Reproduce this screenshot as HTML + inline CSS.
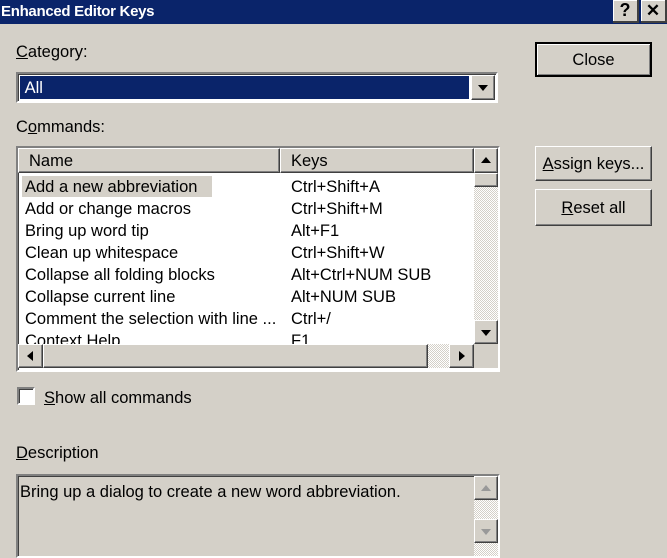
<!DOCTYPE html><html><head><style>
body{margin:0;width:667px;height:547px;background:#d4d0c8;font-family:"Liberation Sans",Arial,sans-serif;font-size:16.5px;color:#000;position:relative;overflow:hidden}
.a{position:absolute}
.title{left:0;top:0;width:667px;height:24px;background:#0a246a;color:#fff;font-weight:bold;font-size:15px;line-height:23px;letter-spacing:-0.3px}
.tb{top:0;width:24px;height:21px;background:#d4d0c8;border-right:2px solid #404040;border-bottom:2px solid #404040;box-shadow:inset 1px 1px #fff;color:#000;font-weight:bold;text-align:center;line-height:21px;font-size:18px;letter-spacing:0}
.sunk{border:2px solid;border-color:#808080 #fff #fff #808080;box-shadow:inset 1px 1px #404040}
.btn{background:#d4d0c8;border:1px solid;border-color:#fff #404040 #404040 #fff;box-shadow:inset -1px -1px #808080;text-align:center;box-sizing:border-box}
.row{height:22px;line-height:24px}
.k{height:22px;line-height:24px}
.tri{width:0;height:0;position:absolute}
u{text-decoration:underline}
.track{background:repeating-conic-gradient(#fff 0 25%,#d4d0c8 0 50%) 0 0/2px 2px}
</style></head><body>
<div class="a title"><span style="padding-left:1px">Enhanced Editor Keys</span></div>
<div class="a tb" style="left:613px">?</div>
<div class="a tb" style="left:641px;font-size:17px">✕</div>

<div class="a" style="left:16px;top:43px"><u>C</u>ategory:</div>
<div class="a sunk" style="left:16px;top:72px;width:478px;height:27px;background:#fff">
 <div class="a" style="left:2px;top:2px;width:449px;height:23px;background:#0a246a;color:#fff;line-height:25px">&nbsp;All</div>
 <div class="a btn" style="left:453px;top:1px;width:24px;height:25px"><div class="tri" style="left:6px;top:9px;border-left:5px solid transparent;border-right:5px solid transparent;border-top:6px solid #000"></div></div>
</div>
<div class="a" style="left:16px;top:118px">C<u>o</u>mmands:</div>

<div class="a sunk" style="left:16px;top:146px;width:480px;height:222px;background:#fff;overflow:hidden">
 <div class="a btn" style="left:0;top:0;width:262px;height:25px;text-align:left;padding-left:10px;line-height:25px">Name</div>
 <div class="a btn" style="left:262px;top:0;width:194px;height:25px;text-align:left;padding-left:10px;line-height:25px">Keys</div>
 <div class="a" style="left:4px;top:28px;width:190px;height:21px;background:#d4d0c8"></div>
 <div class="a" style="left:0;top:0;width:460px;height:200px">
  <div class="a row" style="left:7px;top:27px">Add a new abbreviation</div><div class="a k" style="left:273px;top:27px">Ctrl+Shift+A</div>
  <div class="a row" style="left:7px;top:49px">Add or change macros</div><div class="a k" style="left:273px;top:49px">Ctrl+Shift+M</div>
  <div class="a row" style="left:7px;top:71px">Bring up word tip</div><div class="a k" style="left:273px;top:71px">Alt+F1</div>
  <div class="a row" style="left:7px;top:93px">Clean up whitespace</div><div class="a k" style="left:273px;top:93px">Ctrl+Shift+W</div>
  <div class="a row" style="left:7px;top:115px">Collapse all folding blocks</div><div class="a k" style="left:273px;top:115px">Alt+Ctrl+NUM SUB</div>
  <div class="a row" style="left:7px;top:137px">Collapse current line</div><div class="a k" style="left:273px;top:137px">Alt+NUM SUB</div>
  <div class="a row" style="left:7px;top:159px">Comment the selection with line ...</div><div class="a k" style="left:273px;top:159px">Ctrl+/</div>
  <div class="a row" style="left:7px;top:181px">Context Help</div><div class="a k" style="left:273px;top:181px">F1</div>
 </div>
 <div class="a track" style="left:456px;top:0;width:24px;height:196px"></div>
 <div class="a btn" style="left:456px;top:0;width:24px;height:25px"><div class="tri" style="left:6px;top:8px;border-left:5px solid transparent;border-right:5px solid transparent;border-bottom:6px solid #000"></div></div>
 <div class="a btn" style="left:456px;top:25px;width:24px;height:14px"></div>
 <div class="a btn" style="left:456px;top:172px;width:24px;height:24px"><div class="tri" style="left:6px;top:9px;border-left:5px solid transparent;border-right:5px solid transparent;border-top:6px solid #000"></div></div>
 <div class="a track" style="left:0;top:196px;width:456px;height:24px"></div>
 <div class="a btn" style="left:0;top:196px;width:25px;height:24px"><div class="tri" style="left:8px;top:6px;border-top:5px solid transparent;border-bottom:5px solid transparent;border-right:6px solid #000"></div></div>
 <div class="a btn" style="left:25px;top:196px;width:385px;height:24px"></div>
 <div class="a btn" style="left:431px;top:196px;width:25px;height:24px"><div class="tri" style="left:9px;top:6px;border-top:5px solid transparent;border-bottom:5px solid transparent;border-left:6px solid #000"></div></div>
 <div class="a" style="left:456px;top:196px;width:24px;height:24px;background:#d4d0c8"></div>
</div>

<div class="a btn" style="left:535px;top:42px;width:117px;height:35px;border:2px solid #000;line-height:32px;box-shadow:inset 1px 1px #fff,inset -1px -1px #808080">Close</div>
<div class="a btn" style="left:535px;top:146px;width:117px;height:35px;line-height:34px"><u>A</u>ssign keys...</div>
<div class="a btn" style="left:535px;top:189px;width:117px;height:37px;line-height:36px"><u>R</u>eset all</div>

<div class="a sunk" style="left:17px;top:387px;width:14px;height:14px;background:#fff"></div>
<div class="a" style="left:44px;top:389px"><u>S</u>how all commands</div>

<div class="a" style="left:16px;top:444px"><u>D</u>escription</div>
<div class="a sunk" style="left:16px;top:474px;width:480px;height:80px;background:#d4d0c8">
 <div class="a" style="left:2px;top:7px">Bring up a dialog to create a new word abbreviation.</div>
 <div class="a track" style="left:456px;top:0;width:24px;height:80px"></div>
 <div class="a btn" style="left:456px;top:0;width:24px;height:24px"><div class="tri" style="left:6px;top:8px;border-left:5px solid transparent;border-right:5px solid transparent;border-bottom:6px solid #999"></div></div>
 <div class="a btn" style="left:456px;top:43px;width:24px;height:24px"><div class="tri" style="left:6px;top:9px;border-left:5px solid transparent;border-right:5px solid transparent;border-top:6px solid #999"></div></div>
</div>
</body></html>
